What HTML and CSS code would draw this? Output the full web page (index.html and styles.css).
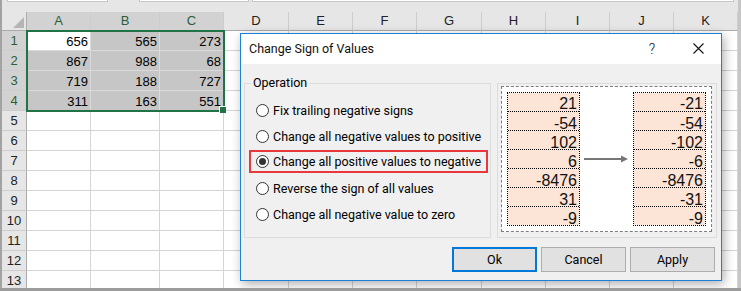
FILE: index.html
```html
<!DOCTYPE html>
<html>
<head>
<meta charset="utf-8">
<link rel="stylesheet" href="styles.css">
</head>
<body>
<div class="app">
  <div class="frame">
    <div class="toolbar">
      <div class="box b1"></div>
      <div class="box b2"></div>
      <div class="box b3"></div>
    </div>
    <div class="sheet">
      <div class="grid">
        <div class="ch corner"><span class="tri"></span></div><div class="ch hs">A</div><div class="ch hs">B</div><div class="ch hs">C</div><div class="ch">D</div><div class="ch">E</div><div class="ch">F</div><div class="ch">G</div><div class="ch">H</div><div class="ch">I</div><div class="ch">J</div><div class="ch">K</div>

        <div class="rh hs">1</div><div class="c act">656</div><div class="c sel">565</div><div class="c sel">273</div><div class="c"></div><div class="c"></div><div class="c"></div><div class="c"></div><div class="c"></div><div class="c"></div><div class="c"></div><div class="c"></div>
        <div class="rh hs">2</div><div class="c sel">867</div><div class="c sel">988</div><div class="c sel">68</div><div class="c"></div><div class="c"></div><div class="c"></div><div class="c"></div><div class="c"></div><div class="c"></div><div class="c"></div><div class="c"></div>
        <div class="rh hs">3</div><div class="c sel">719</div><div class="c sel">188</div><div class="c sel">727</div><div class="c"></div><div class="c"></div><div class="c"></div><div class="c"></div><div class="c"></div><div class="c"></div><div class="c"></div><div class="c"></div>
        <div class="rh hs">4</div><div class="c sel">311</div><div class="c sel">163</div><div class="c sel">551</div><div class="c"></div><div class="c"></div><div class="c"></div><div class="c"></div><div class="c"></div><div class="c"></div><div class="c"></div><div class="c"></div>
        <div class="rh">5</div><div class="c"></div><div class="c"></div><div class="c"></div><div class="c"></div><div class="c"></div><div class="c"></div><div class="c"></div><div class="c"></div><div class="c"></div><div class="c"></div><div class="c"></div>
        <div class="rh">6</div><div class="c"></div><div class="c"></div><div class="c"></div><div class="c"></div><div class="c"></div><div class="c"></div><div class="c"></div><div class="c"></div><div class="c"></div><div class="c"></div><div class="c"></div>
        <div class="rh">7</div><div class="c"></div><div class="c"></div><div class="c"></div><div class="c"></div><div class="c"></div><div class="c"></div><div class="c"></div><div class="c"></div><div class="c"></div><div class="c"></div><div class="c"></div>
        <div class="rh">8</div><div class="c"></div><div class="c"></div><div class="c"></div><div class="c"></div><div class="c"></div><div class="c"></div><div class="c"></div><div class="c"></div><div class="c"></div><div class="c"></div><div class="c"></div>
        <div class="rh">9</div><div class="c"></div><div class="c"></div><div class="c"></div><div class="c"></div><div class="c"></div><div class="c"></div><div class="c"></div><div class="c"></div><div class="c"></div><div class="c"></div><div class="c"></div>
        <div class="rh">10</div><div class="c"></div><div class="c"></div><div class="c"></div><div class="c"></div><div class="c"></div><div class="c"></div><div class="c"></div><div class="c"></div><div class="c"></div><div class="c"></div><div class="c"></div>
        <div class="rh">11</div><div class="c"></div><div class="c"></div><div class="c"></div><div class="c"></div><div class="c"></div><div class="c"></div><div class="c"></div><div class="c"></div><div class="c"></div><div class="c"></div><div class="c"></div>
        <div class="rh">12</div><div class="c"></div><div class="c"></div><div class="c"></div><div class="c"></div><div class="c"></div><div class="c"></div><div class="c"></div><div class="c"></div><div class="c"></div><div class="c"></div><div class="c"></div>
        <div class="rh">13</div><div class="c"></div><div class="c"></div><div class="c"></div><div class="c"></div><div class="c"></div><div class="c"></div><div class="c"></div><div class="c"></div><div class="c"></div><div class="c"></div><div class="c"></div>
      </div>

      <div class="selection"><span class="handle"></span></div>

      <div class="dialog">
        <div class="titlebar">
          <span class="title">Change Sign of Values</span>
          <span class="tb-btn">?</span>
          <span class="tb-btn">
            <svg width="11" height="11" viewBox="0 0 11 11"><path d="M0.5 0.5 L10.5 10.5 M10.5 0.5 L0.5 10.5" stroke="#111" stroke-width="1.1" fill="none"/></svg>
          </span>
        </div>
        <div class="dbody">
          <div class="groups">
            <fieldset class="op">
              <legend>Operation</legend>
              <div class="radio"><span class="circle"></span>Fix trailing negative signs</div>
              <div class="radio"><span class="circle"></span>Change all negative values to positive</div>
              <div class="radio highlight"><span class="circle checked"></span>Change all positive values to negative</div>
              <div class="radio"><span class="circle"></span>Reverse the sign of all values</div>
              <div class="radio"><span class="circle"></span>Change all negative value to zero</div>
            </fieldset>
            <div class="preview">
              <div class="pbox">
                <div class="pcol">
                  <div class="pc">21</div><div class="pc">-54</div><div class="pc">102</div><div class="pc">6</div><div class="pc">-8476</div><div class="pc">31</div><div class="pc">-9</div>
                </div>
                <div class="parrow">
                  <svg width="44" height="8" viewBox="0 0 44 8"><path d="M0 4 H38" stroke="#777" stroke-width="2"/><polygon points="37,0.5 44,4 37,7.5" fill="#777"/></svg>
                </div>
                <div class="pcol">
                  <div class="pc">-21</div><div class="pc">-54</div><div class="pc">-102</div><div class="pc">-6</div><div class="pc">-8476</div><div class="pc">-31</div><div class="pc">-9</div>
                </div>
              </div>
            </div>
          </div>
          <div class="buttons">
            <button class="btn default">Ok</button>
            <button class="btn">Cancel</button>
            <button class="btn">Apply</button>
          </div>
        </div>
      </div>
    </div>
  </div>
  <div class="bottombar"></div>
</div>
</body>
</html>
```

FILE: styles.css
```css
* { box-sizing: border-box; }
html, body { margin: 0; padding: 0; }
body {
  width: 741px;
  height: 291px;
  overflow: hidden;
  background: #fff;
  font-family: "Liberation Sans", Arial, sans-serif;
}
.app {
  width: 741px;
  height: 291px;
  display: flex;
  flex-direction: column;
}
.frame {
  height: 288px;
  border-left: 2px solid #a3a3a3;
  border-right: 3px solid #c6c6c6;
  display: flex;
  flex-direction: column;
}
.bottombar {
  height: 3px;
  background: #9c9c9c;
}
.toolbar {
  height: 12px;
  flex: none;
  background: #e6e6e6;
  display: flex;
  padding-left: 5px;
}
.box {
  height: 2px;
  background: #fff;
  border: 1px solid #c6c6c6;
  border-top: none;
}
.b1 { width: 101px; }
.b2 { width: 110px; margin-left: 31px; }
.b3 { width: 482px; margin-left: 3px; }

.sheet {
  position: relative;
  flex: 1;
  overflow: hidden;
}
.grid {
  display: grid;
  grid-template-columns: 25px 64px 69px 64px 65px 64px 64px 65px 64px 64px 64px 64px;
  grid-template-rows: 19px;
  grid-auto-rows: 20px;
  font-size: 13px;
  color: #000;
}
.ch {
  background: #e6e6e6;
  border-right: 1px solid #cdcdcd;
  border-bottom: 1px solid #ababab;
  text-align: center;
  line-height: 18px;
  color: #222;
}
.corner {
  display: flex;
  justify-content: flex-end;
  align-items: flex-end;
  padding: 0 2px 2px 0;
  border-right-color: #ababab;
}
.tri {
  width: 0;
  height: 0;
  border-left: 11px solid transparent;
  border-bottom: 11px solid #b5b5b5;
}
.rh {
  background: #e6e6e6;
  border-right: 1px solid #ababab;
  border-bottom: 1px solid #cdcdcd;
  text-align: center;
  line-height: 18px;
  padding-top: 1px;
  color: #222;
}
.hs {
  background: #d2d2d2;
  color: #2a5e39;
}
.c {
  border-right: 1px solid #d4d4d4;
  border-bottom: 1px solid #d4d4d4;
  text-align: right;
  padding: 2px 2px 0 0;
  line-height: 18px;
}
.c.sel { background: #c6c6c6; border-color: #dadada; }
.c.act { background: #fff; border-color: #dadada; }

.selection {
  position: absolute;
  left: 24px;
  top: 18px;
  width: 199px;
  height: 82px;
  border: 2px solid #217346;
}
.handle {
  position: absolute;
  right: -3px;
  bottom: -3px;
  width: 7px;
  height: 7px;
  background: #217346;
  border-left: 1px solid #fff;
  border-top: 1px solid #fff;
}

/* dialog */
.dialog {
  position: absolute;
  left: 238px;
  top: 21px;
  width: 482px;
  height: 248px;
  border: 1px solid #1c80d6;
  background: #f0f0f0;
  box-shadow: 2px 3px 10px rgba(0, 0, 0, 0.32);
  font-family: Roboto, "Noto Sans", sans-serif;
  font-size: 12.5px;
  color: #000;
  display: flex;
  flex-direction: column;
}
.titlebar {
  height: 30px;
  flex: none;
  background: #fff;
  display: flex;
  align-items: center;
  padding-left: 8px;
  padding-bottom: 1px;
}
.title {
  flex: 1;
  font-size: 12.5px;
  color: #111;
}
.tb-btn {
  width: 46px;
  height: 29px;
  display: flex;
  align-items: center;
  justify-content: center;
  font-size: 14px;
  font-weight: 300;
  color: #111;
}
.dbody {
  flex: 1;
  display: flex;
  flex-direction: column;
  padding: 11px 4px 8px 3px;
}
.groups {
  display: flex;
  gap: 6px;
  height: 163px;
}
fieldset.op {
  margin: 0;
  padding: 6px 0 0 0;
  width: 247px;
  height: 163px;
  border: 1px solid #dcdcdc;
  min-width: 0;
}
fieldset.op legend {
  margin-left: 6px;
  padding: 0 2px;
  line-height: 16px;
  font-size: 12.5px;
}
.radio {
  height: 26px;
  display: flex;
  align-items: center;
  padding-left: 11px;
  gap: 4px;
  white-space: nowrap;
}
.radio.highlight {
  height: 23px;
  margin: 1px 2px 2px 4px;
  border: 2px solid #e8383d;
  padding-left: 5px;
}
.circle {
  width: 13px;
  height: 13px;
  flex: none;
  border: 1px solid #333;
  border-radius: 50%;
  background: #fff;
  display: flex;
  align-items: center;
  justify-content: center;
}
.circle.checked::after {
  content: "";
  width: 7px;
  height: 7px;
  border-radius: 50%;
  background: #333;
}
.preview {
  margin-top: 8px;
  width: 220px;
  border: 1px solid #dcdcdc;
  padding: 2px 4px 5px 3px;
  display: flex;
}
.pbox {
  flex: 1;
  background: #fff;
  border: 1px dashed #7d7d7d;
  padding: 5px;
  display: flex;
  align-items: flex-start;
}
.pcol {
  width: 73px;
  border: 1px dotted #000;
  font-family: "Liberation Sans", Arial, sans-serif;
  font-size: 16px;
  color: #111;
}
.pc {
  height: 18px;
  line-height: 21px;
  background: #fce4d6;
  text-align: right;
  padding-right: 2px;
}
.pc + .pc { border-top: 1px dotted #000; height: 19px; line-height: 23px; }
.parrow {
  flex: 1;
  align-self: center;
  display: flex;
  padding-left: 4px;
}
.parrow svg { display: block; }
.buttons {
  display: flex;
  justify-content: flex-end;
  gap: 4px;
  margin-top: 9px;
  padding-right: 2px;
}
.btn {
  width: 85px;
  height: 25px;
  background: #e1e1e1;
  border: 1px solid #adadad;
  font-family: Roboto, "Noto Sans", sans-serif;
  font-size: 12.5px;
  color: #000;
  padding: 0;
  margin: 0;
}
.btn.default { border: 2px solid #0078d7; }
```
